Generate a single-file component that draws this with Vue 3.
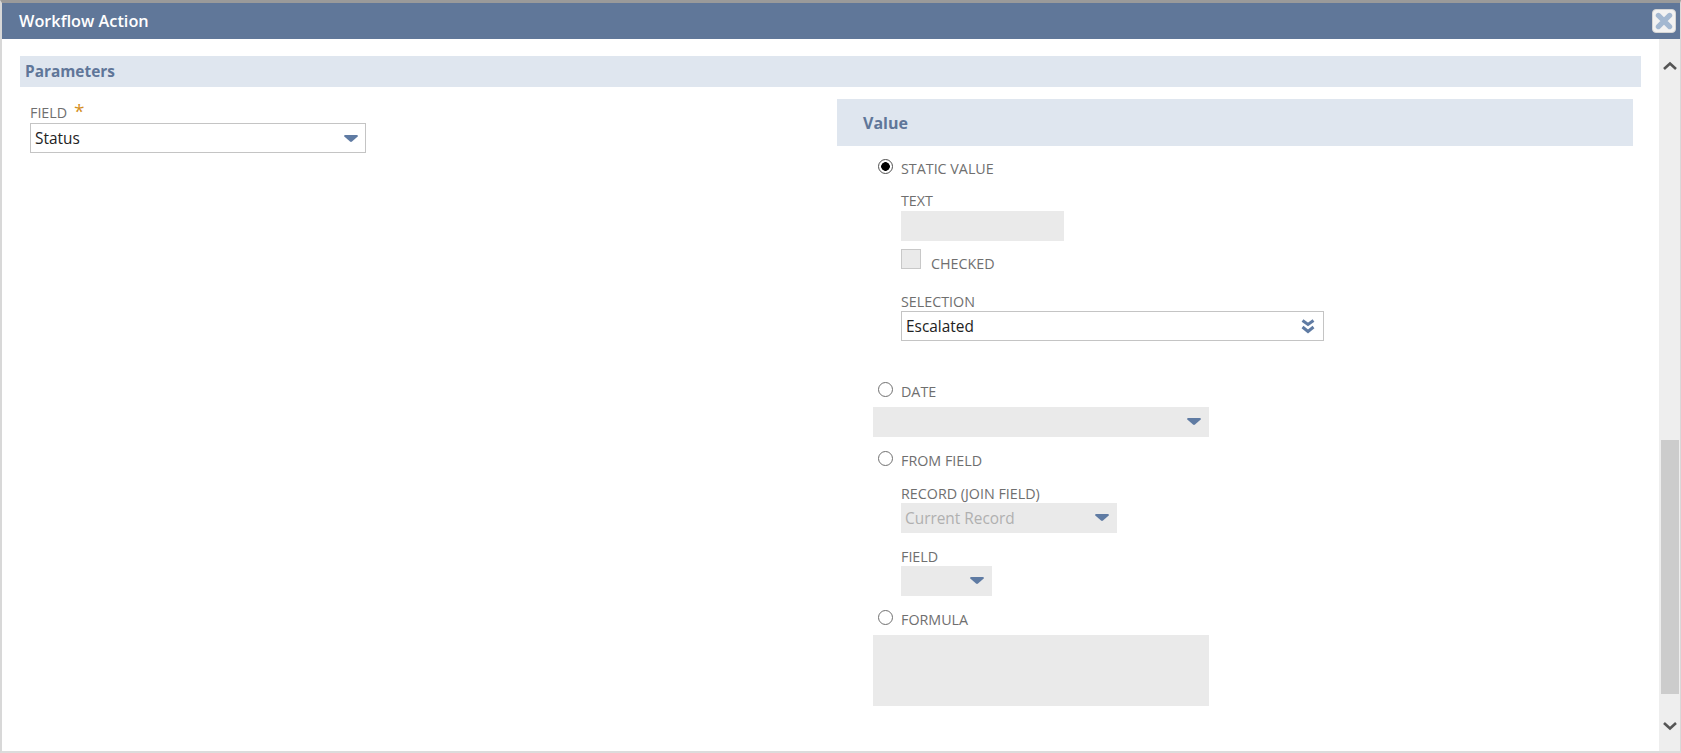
<script setup>
// アイコンの形は共通なのでここにまとめる
const arrowPath = 'M0 1.2 Q0 0 1.4 0 H12.6 Q14 0 14 1.2 L8 6.6 Q7 7.4 6 6.6 Z'
</script>

<template>
  <div class="dialog">
    <header class="titlebar">
      <span class="title">Workflow Action</span>
      <button class="close-btn" aria-label="Close">
        <svg width="18" height="18" viewBox="0 0 16 16">
          <path d="M3 3 L13 13 M13 3 L3 13" stroke="#a3b8d1" stroke-width="4.6" stroke-linecap="round" />
        </svg>
      </button>
    </header>

    <div class="body">
      <main class="content">
        <div class="section-head">Parameters</div>
        <div class="columns">
          <div class="left-col">
            <label class="label field-top">FIELD <span class="required">*</span></label>
            <div class="select status-select">
              <span>Status</span>
              <svg class="arrow" width="14" height="8" viewBox="0 0 14 8"><path :d="arrowPath" /></svg>
            </div>
          </div>

          <div class="right-col">
            <div class="value-head">Value</div>

            <div class="radio-row first">
              <span class="radio checked"></span>
              <span class="label">STATIC VALUE</span>
            </div>
            <div class="indent">
              <div class="label text-label">TEXT</div>
              <div class="box text-input"></div>
              <div class="check-row">
                <span class="checkbox"></span>
                <span class="label">CHECKED</span>
              </div>
              <div class="label selection-label">SELECTION</div>
              <div class="select selection-select">
                <span>Escalated</span>
                <svg class="double" width="14" height="15" viewBox="0 0 14 15">
                  <path d="M1.5 1.5 L7 5.5 L12.5 1.5 M1.5 8 L7 12.5 L12.5 8" fill="none" stroke="#5f7ba3" stroke-width="3" />
                </svg>
              </div>
            </div>

            <div class="radio-row date-row">
              <span class="radio"></span>
              <span class="label">DATE</span>
            </div>
            <div class="box date-select">
              <svg class="arrow" width="14" height="8" viewBox="0 0 14 8"><path :d="arrowPath" /></svg>
            </div>

            <div class="radio-row from-row">
              <span class="radio"></span>
              <span class="label">FROM FIELD</span>
            </div>
            <div class="indent">
              <div class="label record-label">RECORD (JOIN FIELD)</div>
              <div class="box record-select">
                <span>Current Record</span>
                <svg class="arrow" width="14" height="8" viewBox="0 0 14 8"><path :d="arrowPath" /></svg>
              </div>
              <div class="label field-label">FIELD</div>
              <div class="box field-select">
                <svg class="arrow" width="14" height="8" viewBox="0 0 14 8"><path :d="arrowPath" /></svg>
              </div>
            </div>

            <div class="radio-row formula-row">
              <span class="radio"></span>
              <span class="label">FORMULA</span>
            </div>
            <div class="box formula-box"></div>
          </div>
        </div>
      </main>

      <aside class="scrollbar">
        <svg class="chevron up" width="14" height="10" viewBox="0 0 14 10">
          <path d="M1 8 L7 2.5 L13 8" fill="none" stroke="#555" stroke-width="2.6" />
        </svg>
        <div class="thumb"></div>
        <svg class="chevron down" width="14" height="10" viewBox="0 0 14 10">
          <path d="M1 2 L7 7.5 L13 2" fill="none" stroke="#555" stroke-width="2.6" />
        </svg>
      </aside>
    </div>
  </div>
</template>

<style scoped>
    .dialog {
        width: 1681px;
        height: 753px;
        box-sizing: border-box;
        display: flex;
        flex-direction: column;
        background: #fff;
        border-top: 3px solid #9a9a9a;
        border-left: 2px solid #d8d8d8;
        border-right: 1px solid #d8d8d8;
        border-bottom: 2px solid #dcdcdc;
        font-family: "Open Sans", sans-serif;
        overflow: hidden;
    }
    .titlebar {
        height: 36px;
        flex: none;
        display: flex;
        align-items: center;
        justify-content: space-between;
        padding: 0 4px 0 17px;
        background: #607799;
    }
    .title {
        color: #fff;
        font-size: 16.3px;
        font-weight: 600;
    }
    .close-btn {
        width: 24px;
        height: 24px;
        padding: 0;
        border: 1px solid #d5d5d5;
        border-radius: 4px;
        background: #f2f2f2;
        display: flex;
        align-items: center;
        justify-content: center;
    }
    .body {
        flex: 1;
        display: flex;
        min-height: 0;
    }
    .content {
        flex: 1;
        padding: 17px 18px 0 18px;
    }
    .section-head {
        height: 31px;
        line-height: 31px;
        padding-left: 5px;
        background: #dfe6ef;
        color: #5f7699;
        font-size: 15.4px;
        font-weight: 700;
    }
    .columns {
        display: flex;
    }
    .left-col {
        width: 817px;
        flex: none;
        padding: 17px 0 0 10px;
        box-sizing: border-box;
    }
    .right-col {
        width: 796px;
        flex: none;
        padding-top: 12px;
    }
    .label {
        display: block;
        color: #6f6f6f;
        font-size: 14.3px;
        line-height: 18px;
    }
    .field-top {
        margin-bottom: 1px;
    }
    .required {
        color: #d5901f;
        font-size: 19px;
        line-height: 10px;
        margin-left: 3px;
    }
    .select {
        box-sizing: border-box;
        height: 30px;
        border: 1px solid #c4c4c4;
        background: #fff;
        color: #222;
        font-size: 15.4px;
        display: flex;
        align-items: center;
        justify-content: space-between;
        padding: 1px 7px 0 4px;
    }
    .status-select {
        width: 336px;
    }
    .selection-select {
        width: 423px;
        padding-right: 8px;
    }
    .arrow {
        fill: #5f7ba3;
        flex: none;
    }
    .value-head {
        height: 47px;
        line-height: 48px;
        padding-left: 26px;
        background: #dfe6ef;
        color: #5f7699;
        font-size: 16px;
        font-weight: 700;
    }
    .radio-row {
        display: flex;
        align-items: center;
        gap: 8px;
        padding-left: 41px;
        height: 18px;
    }
    .radio {
        width: 15px;
        height: 15px;
        box-sizing: border-box;
        border: 1.5px solid #707070;
        border-radius: 50%;
        background: #fff;
        flex: none;
        margin-top: -5px;
    }
    .radio.checked {
        background: radial-gradient(circle, #000 0 4px, #fff 4.6px);
        border-color: #505050;
    }
    .first {
        margin-top: 14px;
    }
    .first .label {
        margin-top: -1px;
    }
    .indent {
        padding-left: 64px;
    }
    .text-label {
        margin: 14px 0 1px;
    }
    .box {
        box-sizing: border-box;
        height: 30px;
        background: #eaeaea;
        display: flex;
        align-items: center;
        justify-content: space-between;
    }
    .text-input {
        width: 163px;
    }
    .check-row {
        display: flex;
        align-items: flex-end;
        gap: 10px;
        margin-top: 8px;
    }
    .checkbox {
        width: 20px;
        height: 20px;
        box-sizing: border-box;
        border: 1px solid #c8c8c8;
        background: #eaeaea;
    }
    .check-row .label {
        margin-bottom: -4px;
    }
    .selection-label {
        margin-top: 24px;
    }
    .double {
        flex: none;
    }
    .date-row {
        margin-top: 42px;
    }
    .date-select {
        width: 336px;
        margin: 6px 0 0 36px;
        justify-content: flex-end;
        padding-right: 8px;
    }
    .from-row {
        margin-top: 15px;
    }
    .record-label {
        margin-top: 15px;
    }
    .record-select {
        width: 216px;
        padding: 0 8px 0 4px;
        color: #b0b0b0;
        font-size: 15.4px;
    }
    .field-label {
        margin-top: 15px;
    }
    .field-select {
        width: 91px;
        justify-content: flex-end;
        padding-right: 8px;
    }
    .formula-row {
        margin-top: 15px;
    }
    .formula-box {
        width: 336px;
        height: 71px;
        margin: 6px 0 0 36px;
    }
    .scrollbar {
        width: 21px;
        flex: none;
        background: #eeeeee;
        display: flex;
        flex-direction: column;
        align-items: center;
    }
    .chevron {
        flex: none;
    }
    .up {
        margin-top: 22px;
    }
    .thumb {
        width: 18px;
        height: 254px;
        margin-top: 369px;
        background: #cccccc;
    }
    .down {
        margin-top: 27px;
    }
</style>

<style>
    html, body {
        margin: 0;
        background: #fff;
    }
</style>
